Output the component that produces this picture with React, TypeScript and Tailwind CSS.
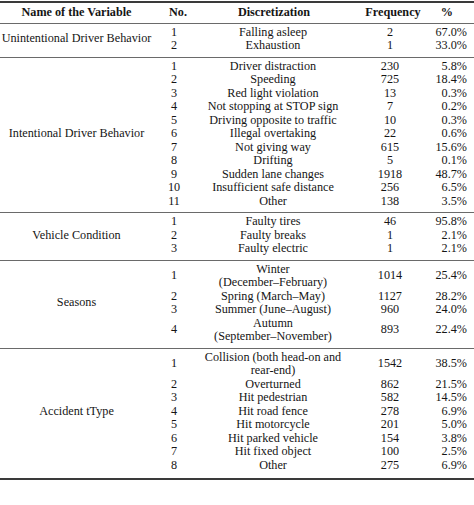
import React from "react";

type Item = { no: string; d: string[]; f: string; p: string };
type Section = { name: string; items: Item[] };

const sections: Section[] = [
  {
    name: "Unintentional Driver Behavior",
    items: [
      { no: "1", d: ["Falling asleep"], f: "2", p: "67.0%" },
      { no: "2", d: ["Exhaustion"], f: "1", p: "33.0%" },
    ],
  },
  {
    name: "Intentional Driver Behavior",
    items: [
      { no: "1", d: ["Driver distraction"], f: "230", p: "5.8%" },
      { no: "2", d: ["Speeding"], f: "725", p: "18.4%" },
      { no: "3", d: ["Red light violation"], f: "13", p: "0.3%" },
      { no: "4", d: ["Not stopping at STOP sign"], f: "7", p: "0.2%" },
      { no: "5", d: ["Driving opposite to traffic"], f: "10", p: "0.3%" },
      { no: "6", d: ["Illegal overtaking"], f: "22", p: "0.6%" },
      { no: "7", d: ["Not giving way"], f: "615", p: "15.6%" },
      { no: "8", d: ["Drifting"], f: "5", p: "0.1%" },
      { no: "9", d: ["Sudden lane changes"], f: "1918", p: "48.7%" },
      { no: "10", d: ["Insufficient safe distance"], f: "256", p: "6.5%" },
      { no: "11", d: ["Other"], f: "138", p: "3.5%" },
    ],
  },
  {
    name: "Vehicle Condition",
    items: [
      { no: "1", d: ["Faulty tires"], f: "46", p: "95.8%" },
      { no: "2", d: ["Faulty breaks"], f: "1", p: "2.1%" },
      { no: "3", d: ["Faulty electric"], f: "1", p: "2.1%" },
    ],
  },
  {
    name: "Seasons",
    items: [
      { no: "1", d: ["Winter", "(December–February)"], f: "1014", p: "25.4%" },
      { no: "2", d: ["Spring (March–May)"], f: "1127", p: "28.2%" },
      { no: "3", d: ["Summer (June–August)"], f: "960", p: "24.0%" },
      { no: "4", d: ["Autumn", "(September–November)"], f: "893", p: "22.4%" },
    ],
  },
  {
    name: "Accident tType",
    items: [
      { no: "1", d: ["Collision (both head-on and", "rear-end)"], f: "1542", p: "38.5%" },
      { no: "2", d: ["Overturned"], f: "862", p: "21.5%" },
      { no: "3", d: ["Hit pedestrian"], f: "582", p: "14.5%" },
      { no: "4", d: ["Hit road fence"], f: "278", p: "6.9%" },
      { no: "5", d: ["Hit motorcycle"], f: "201", p: "5.0%" },
      { no: "6", d: ["Hit parked vehicle"], f: "154", p: "3.8%" },
      { no: "7", d: ["Hit fixed object"], f: "100", p: "2.5%" },
      { no: "8", d: ["Other"], f: "275", p: "6.9%" },
    ],
  },
];

function Row({ it }: { it: Item }) {
  return (
    <div className="flex items-center">
      <div className="w-[42px] text-center">{it.no}</div>
      <div className="w-[156px] text-center">
        {it.d.map((l, i) => (
          <div key={i}>{l}</div>
        ))}
      </div>
      <div className="w-[78px] text-center">{it.f}</div>
      <div className="w-[45px] pr-[7px] text-right">{it.p}</div>
    </div>
  );
}

export default function App() {
  return (
    <div
      className="w-[474px] h-[505px] bg-white text-[#151515] text-[12.2px] leading-[13.5px]"
      style={{ fontFamily: '"Liberation Serif", "Times New Roman", serif' }}
    >
      <div className="pt-px">
        <div className="border-t-2 border-[#3a3a3a]" />
        <div className="flex items-center h-[19.5px] font-bold">
          <div className="w-[153px] text-center">Name of the Variable</div>
          <div className="w-[42px] pl-[8px] text-center">No.</div>
          <div className="w-[156px] pl-[2px] text-center">Discretization</div>
          <div className="w-[78px] pl-[6px] text-center">Frequency</div>
          <div className="w-[45px] pr-[21px] text-right">%</div>
        </div>
        {sections.map((s, i) => (
          <div key={i} className="border-t border-[#6a6a6a]">
            <div
              className={
                i === sections.length - 1
                  ? "flex items-center pt-[2px] pb-[6px]"
                  : "flex items-center pt-[2px] pb-[4px]"
              }
            >
              <div className="w-[153px] text-center">{s.name}</div>
              <div className="flex flex-col">
                {s.items.map((it, j) => (
                  <Row key={j} it={it} />
                ))}
              </div>
            </div>
          </div>
        ))}
        <div className="border-t-2 border-[#3a3a3a]" />
      </div>
    </div>
  );
}
